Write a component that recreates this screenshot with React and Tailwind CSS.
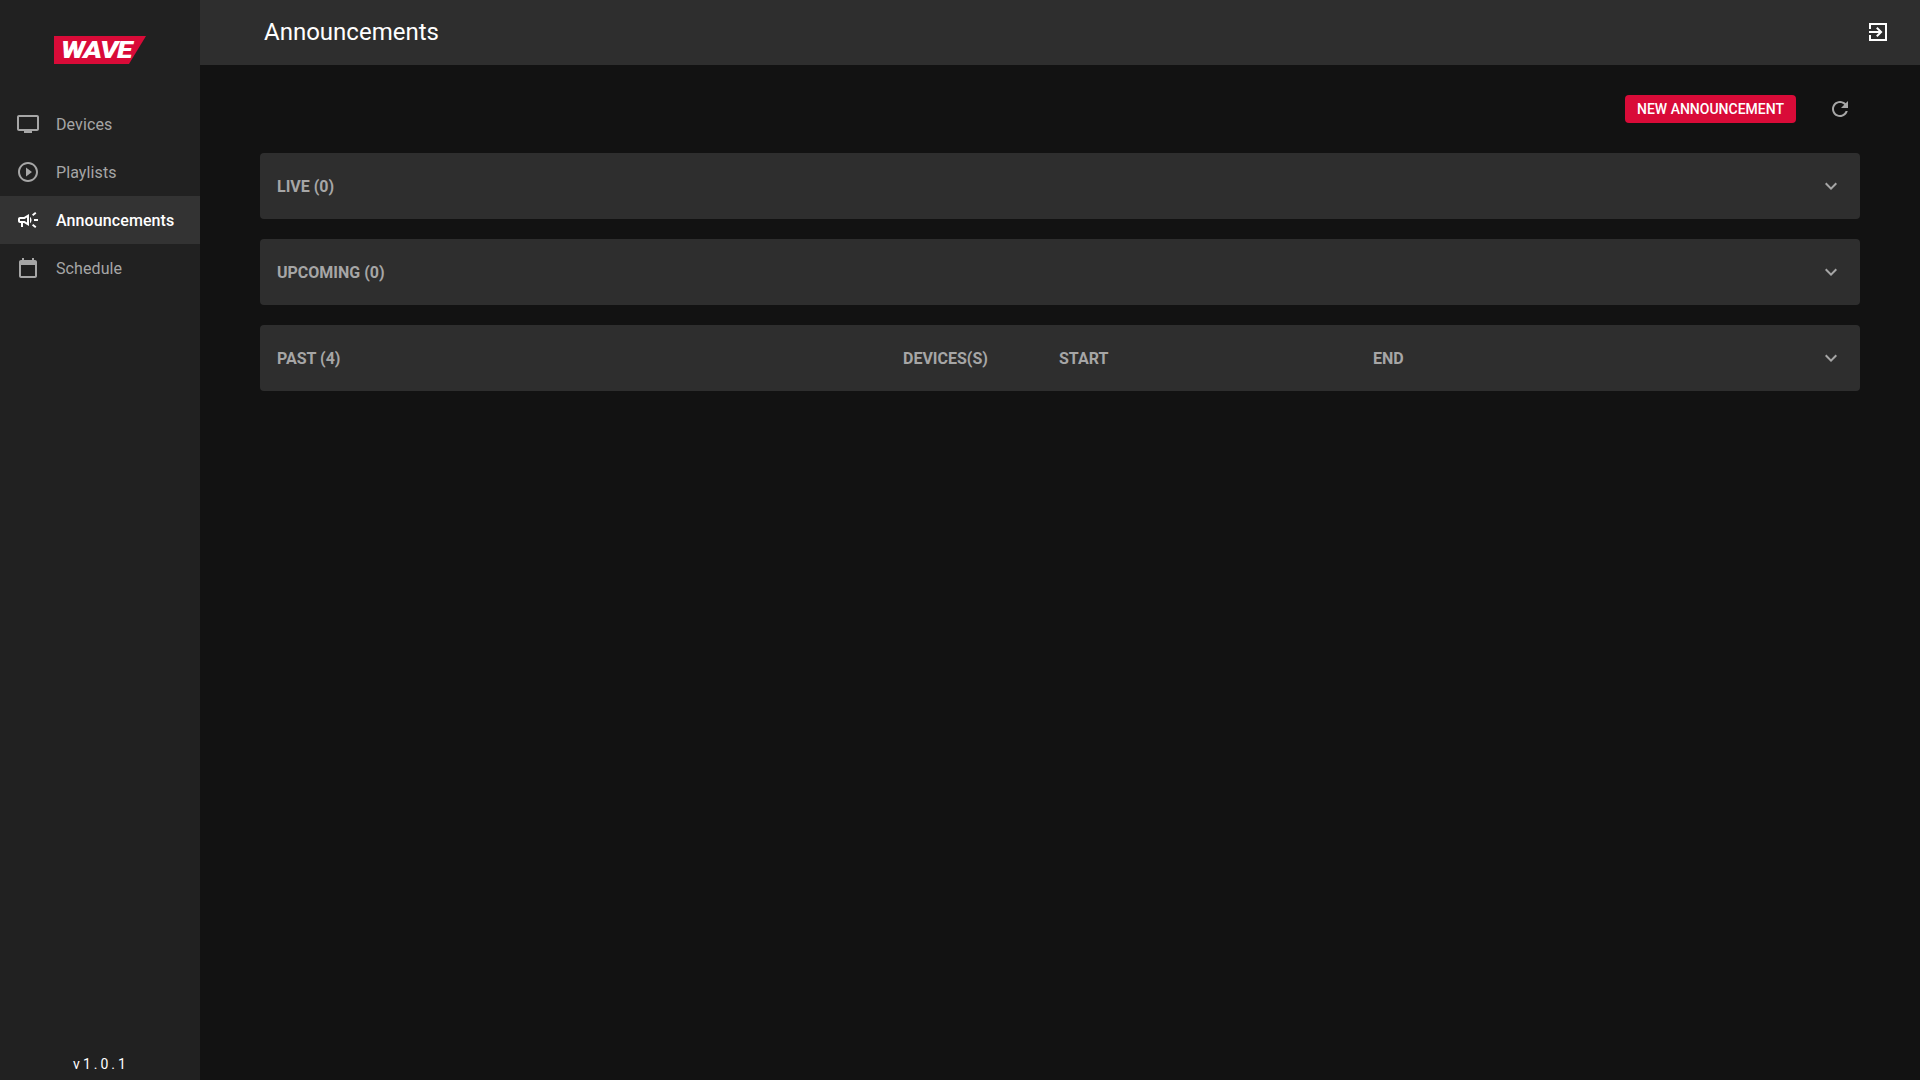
import React from "react";

const navItems = [
  {
    label: "Devices",
    path: "M21 3H3c-1.1 0-2 .9-2 2v12c0 1.1.9 2 2 2h5v2h8v-2h5c1.1 0 2-.9 2-2V5c0-1.1-.9-2-2-2zm0 14H3V5h18v12z",
  },
  {
    label: "Playlists",
    path: "M10 16.5l6-4.5-6-4.5v9zM12 2C6.48 2 2 6.48 2 12s4.48 10 10 10 10-4.48 10-10S17.52 2 12 2zm0 18c-4.41 0-8-3.59-8-8s3.59-8 8-8 8 3.59 8 8-3.59 8-8 8z",
  },
  {
    label: "Announcements",
    active: true,
    path: "M18 11v2h4v-2h-4zm-2 6.61c.96.71 2.21 1.65 3.2 2.39.4-.53.8-1.07 1.2-1.6-.99-.74-2.24-1.68-3.2-2.4-.4.54-.8 1.08-1.2 1.61zM20.4 5.6c-.4-.53-.8-1.07-1.2-1.6-.99.74-2.24 1.68-3.2 2.4.4.53.8 1.07 1.2 1.6.96-.72 2.21-1.65 3.2-2.4zM4 9c-1.1 0-2 .9-2 2v2c0 1.1.9 2 2 2h1v4h2v-4h1l5 3V6L8 9H4zm5.03 1.71L11 9.53v4.94l-1.97-1.18-.48-.29H4v-2h4.55l.48-.29zM15.5 12c0-1.33-.58-2.53-1.5-3.35v6.69c.92-.81 1.5-2.01 1.5-3.34z",
  },
  {
    label: "Schedule",
    path: "M19 4h-1V2h-2v2H8V2H6v2H5c-1.1 0-2 .9-2 2v14c0 1.1.9 2 2 2h14c1.1 0 2-.9 2-2V6c0-1.1-.9-2-2-2zm0 16H5V9h14v11z",
  },
];

const Icon = ({ path, className }) => (
  <svg viewBox="0 0 24 24" className={`w-6 h-6 fill-current shrink-0 ${className || ""}`}>
    <path d={path} />
  </svg>
);

const Section = ({ title, columns }) => (
  <div className="h-[66px] flex items-center pl-[17px] pr-[17px] bg-[#2e2e2e] rounded text-[#a6a6a6] text-base font-bold">
    <span className="w-[626px] pt-[2px]">{title}</span>
    {columns && (
      <>
        <span className="w-[156px] pt-[2px]">DEVICES(S)</span>
        <span className="w-[314px] pt-[2px]">START</span>
        <span className="pt-[2px]">END</span>
      </>
    )}
    <Icon
      className="ml-auto"
      path="M16.59 8.59L12 13.17 7.41 8.59 6 10l6 6 6-6z"
    />
  </div>
);

export default function App() {
  return (
    <div className="flex h-screen bg-[#121212] font-['Roboto',sans-serif] overflow-hidden">
      <aside className="w-[200px] shrink-0 bg-[#212121] flex flex-col">
        <div className="h-[100px] flex justify-center pt-9">
          <div className="w-[92px] h-7 bg-[#d90b38] [clip-path:polygon(0_0,100%_0,81.5%_100%,0_100%)] pl-[7px] text-white text-[24px] leading-7 font-black italic tracking-[-1px]">
            <span className="inline-block origin-left scale-x-[1.19]">WAVE</span>
          </div>
        </div>
        <nav>
          {navItems.map((item) => (
            <div
              key={item.label}
              className={`h-12 flex items-center pl-4 gap-4 ${
                item.active ? "bg-[#333333] text-white font-medium" : "text-[#a6a6a6]"
              }`}
            >
              <Icon path={item.path} />
              <span className="text-base pt-[2px] tracking-[0.1px]">{item.label}</span>
            </div>
          ))}
        </nav>
        <div className="mt-auto pb-1.5 pl-[2px] text-center text-sm leading-5 tracking-[3px] text-white">
          v1.0.1
        </div>
      </aside>

      <div className="flex-1 flex flex-col">
        <header className="h-[65px] bg-[#2e2e2e] flex items-center justify-between pl-16 pr-[30px] pb-[2px] text-white">
          <h1 className="text-2xl">Announcements</h1>
          <Icon path="M10.09 15.59L11.5 17l5-5-5-5-1.41 1.41L12.67 11H3v2h9.67l-2.58 2.59zM21 3H3v6h2V5h14v14H5v-4H3v6h18V3z" />
        </header>

        <main className="px-[60px] pt-[30px]">
          <div className="flex items-center justify-end h-7 pr-[8px] gap-[32px]">
            <button className="h-7 w-[171px] rounded bg-[#d90b38] text-white text-sm font-medium">
              NEW ANNOUNCEMENT
            </button>
            <Icon
              className="text-[#a6a6a6]"
              path="M17.65 6.35C16.2 4.9 14.21 4 12 4c-4.42 0-7.99 3.58-7.99 8s3.57 8 7.99 8c3.73 0 6.84-2.55 7.73-6h-2.08c-.82 2.33-3.04 4-5.65 4-3.31 0-6-2.69-6-6s2.69-6 6-6c1.66 0 3.14.69 4.22 1.78L13 11h7V4l-2.35 2.35z"
            />
          </div>
          <div className="mt-[30px] flex flex-col gap-5">
            <Section title="LIVE (0)" />
            <Section title="UPCOMING (0)" />
            <Section title="PAST (4)" columns />
          </div>
        </main>
      </div>
    </div>
  );
}
